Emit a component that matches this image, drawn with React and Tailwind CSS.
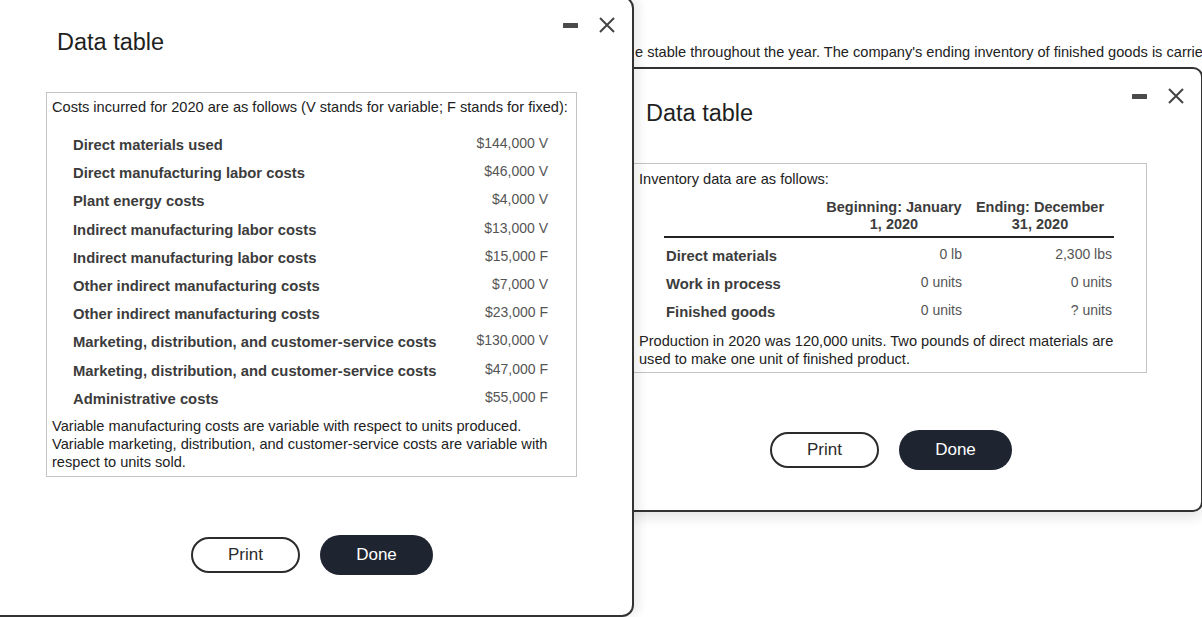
import React from 'react';

const costs = [
  ['Direct materials used', '$144,000 V'],
  ['Direct manufacturing labor costs', '$46,000 V'],
  ['Plant energy costs', '$4,000 V'],
  ['Indirect manufacturing labor costs', '$13,000 V'],
  ['Indirect manufacturing labor costs', '$15,000 F'],
  ['Other indirect manufacturing costs', '$7,000 V'],
  ['Other indirect manufacturing costs', '$23,000 F'],
  ['Marketing, distribution, and customer-service costs', '$130,000 V'],
  ['Marketing, distribution, and customer-service costs', '$47,000 F'],
  ['Administrative costs', '$55,000 F'],
];

const inventory = [
  ['Direct materials', '0 lb', '2,300 lbs'],
  ['Work in process', '0 units', '0 units'],
  ['Finished goods', '0 units', '? units'],
];

const DialogHeader = () => (
  <div className="flex items-start justify-between pl-[57px] pr-[17px] pt-[19px]">
    <h2 className="mt-[11px] text-[23.5px] leading-[28px] text-[#1f1f1f]">Data table</h2>
    <div className="flex h-[16px] items-center gap-[21px]">
      <svg width="15" height="5" viewBox="0 0 15 5">
        <rect x="0" y="0" width="15" height="5" rx="0.5" fill="#4a4a4a" />
      </svg>
      <svg width="16" height="16" viewBox="0 0 16 16">
        <path d="M1 1L15 15M15 1L1 15" stroke="#444" strokeWidth="2" />
      </svg>
    </div>
  </div>
);

const Buttons = () => (
  <div className="flex items-center justify-center gap-[20px] pr-[8px]">
    <button className="h-[36px] w-[109px] rounded-full border-2 border-[#2b2b2b] bg-white text-[17px] text-[#2b2b2b]">
      Print
    </button>
    <button className="h-[40px] w-[113px] rounded-full bg-[#1e2430] text-[17px] text-white">
      Done
    </button>
  </div>
);

const App = () => {
  return (
    <div
      className="flex h-[617px] w-full overflow-hidden bg-white text-[14.6px] text-[#222]"
      style={{ fontFamily: '"Liberation Sans", Arial, sans-serif' }}
    >
      {/* left dialog */}
      <div className="relative z-10 -mt-[4px] flex w-[634px] shrink-0 flex-col self-start rounded-r-[12px] border-y-2 border-r-2 border-[#333] bg-white pb-[40px] shadow-[6px_0_10px_rgba(0,0,0,0.07)]">
        <DialogHeader />
        <div className="ml-[46px] mr-[55px] mt-[36px] border border-[#c4c4c4] px-[5px] pb-[5px] pt-[5px]">
          <p className="leading-[18px]">Costs incurred for 2020 are as follows (V stands for variable; F stands for fixed):</p>
          <div className="ml-[21px] mr-[23px] mt-[15px]">
            {costs.map(([label, value], i) => (
              <div key={i} className="flex h-[28.2px] items-center justify-between">
                <span className="text-[14.8px] font-bold text-[#3c3c3c]">{label}</span>
                <span className="-mt-[3px] text-[14px] text-[#555]">{value}</span>
              </div>
            ))}
          </div>
          <p className="mt-[4px] leading-[18px]">
            Variable manufacturing costs are variable with respect to units produced.
            <br />
            Variable marketing, distribution, and customer-service costs are variable with
            <br />
            respect to units sold.
          </p>
        </div>
        <div className="mt-[58px]">
          <Buttons />
        </div>
      </div>

      {/* right side */}
      <div className="min-w-0 flex-1 overflow-hidden pt-[43px]">
        <p className="whitespace-nowrap pl-[1px] leading-[18px]">
          e stable throughout the year. The company's ending inventory of finished goods is carried at
        </p>
        <div className="-ml-[47px] mt-[6px] flex w-[616px] flex-col rounded-[10px] border-2 border-[#333] bg-white pb-[40px] shadow-[0_6px_12px_rgba(0,0,0,0.1)]">
          <DialogHeader />
          <div className="ml-[44px] mr-[54px] mt-[36px] border border-[#c4c4c4] px-[5px] pb-[4px] pt-[6px]">
            <p className="leading-[18px]">Inventory data are as follows:</p>
            <div className="ml-[25px] mr-[27px] mt-[11px]">
              <div className="grid grid-cols-[160px_140px_148px] border-b-2 border-[#222] pb-[3px] text-[14.5px] font-bold leading-[17px] text-[#3c3c3c]">
                <div></div>
                <div className="text-center">
                  Beginning: January
                  <br />
                  1, 2020
                </div>
                <div className="pl-[4px] text-center">
                  Ending: December
                  <br />
                  31, 2020
                </div>
              </div>
              <div className="mt-[4px]">
                {inventory.map(([label, begin, end]) => (
                  <div key={label} className="grid h-[28px] grid-cols-[160px_140px_148px] items-center">
                    <span className="pl-[2px] text-[14.8px] font-bold text-[#3c3c3c]">{label}</span>
                    <span className="-mt-[3px] pr-[2px] text-right text-[14px] text-[#555]">{begin}</span>
                    <span className="-mt-[3px] text-right text-[14px] text-[#555]">{end}</span>
                  </div>
                ))}
              </div>
            </div>
            <p className="mt-[6px] leading-[18px]">
              Production in 2020 was 120,000 units. Two pounds of direct materials are
              <br />
              used to make one unit of finished product.
            </p>
          </div>
          <div className="mt-[57px]">
            <Buttons />
          </div>
        </div>
      </div>
    </div>
  );
};

export default App;
